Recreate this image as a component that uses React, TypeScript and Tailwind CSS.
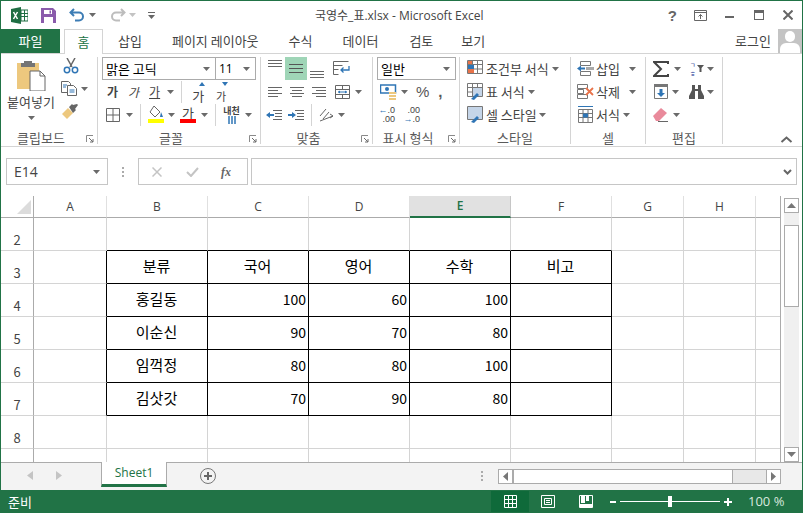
import React from 'react';

const Caret = ({ className = '' }: { className?: string }) => (
  <svg width="7" height="4" viewBox="0 0 7 4" className={`shrink-0 ${className}`}>
    <path d="M0 0h7L3.5 4z" fill="#6a6a6a" />
  </svg>
);

const Launcher = () => (
  <svg width="8" height="8" viewBox="0 0 8 8" className="absolute right-[3px] bottom-[1px]">
    <path d="M0.5 7V0.5H7" fill="none" stroke="#8a8a8a" />
    <path d="M3 3l4 4M7 4v3H4" fill="none" stroke="#6a6a6a" />
  </svg>
);

const Sep = ({ className = '' }: { className?: string }) => <div className={`w-px h-[22px] bg-[#d4d4d4] ${className}`} />;

const Group = ({ w, label, launcher, children }: { w: string; label: string; launcher?: boolean; children: React.ReactNode }) => (
  <div className={`relative flex flex-col border-r border-[#d4d4d4] ${w}`}>
    <div className="h-[73px] flex flex-col">{children}</div>
    <div className={`h-[14px] flex items-center justify-center text-[13px] leading-none text-[#5a5a5a] ${launcher ? 'pr-[16px]' : ''}`}>{label}</div>
    {launcher && <Launcher />}
  </div>
);

const Lines = ({ ys, x1s, x2s }: { ys: number[]; x1s: number[]; x2s: number[] }) => (
  <svg width="16" height="14" viewBox="0 0 16 14" className="shrink-0">
    {ys.map((y, i) => (
      <path key={i} d={`M${x1s[i]} ${y + 0.5}H${x2s[i]}`} stroke="#666" />
    ))}
  </svg>
);

const Ga = ({ className = '' }: { className?: string }) => <span className={`text-[12px] leading-none text-[#444] ${className}`}>가</span>;

const StyleIcon = ({ children }: { children?: React.ReactNode }) => (
  <svg width="17" height="17" viewBox="0 0 17 17" className="shrink-0">
    <path d="M.5.5h15v13H.5zM.5 4.500h15M.5 9h15M5.500.5v13M10.500.5v13" fill="#fff" stroke="#777" />
    {children}
  </svg>
);

const columns = ['B', 'C', 'D', 'E', 'F'];
const rows = [
  { n: 3, cells: ['분류', '국어', '영어', '수학', '비고'], head: true },
  { n: 4, cells: ['홍길동', '100', '60', '100', ''] },
  { n: 5, cells: ['이순신', '90', '70', '80', ''] },
  { n: 6, cells: ['임꺽정', '80', '80', '100', ''] },
  { n: 7, cells: ['김삿갓', '70', '90', '80', ''] },
];

const gridCell = 'border-r border-b border-[#d4d4d4]';
const rowHead = 'border-r border-b border-[#ababab] border-b-[#d4d4d4] flex items-end justify-center pb-[1px] text-[13px] leading-[18px] text-[#444]';

export default function App() {
  return (
    <div className="w-[803px] h-[513px] flex flex-col bg-white border-x border-t border-[#217346] overflow-hidden text-[#444] font-['Noto_Sans_CJK_KR','Noto_Sans',sans-serif]">
      {/* title bar */}
      <div className="relative h-[28px] flex items-center shrink-0">
        <svg width="17" height="17" viewBox="0 0 17 17" className="ml-[10px]">
          <path d="M0 2l10-2v17L0 15z" fill="#1f6e43" />
          <path d="M10 3h7v11h-7z" fill="#fff" stroke="#1f6e43" />
          <path d="M10 6.500h7M10 9.500h7M13.500 3v11" stroke="#1f6e43" />
          <path d="M2.500 5l4 7M6.500 5l-4 7" stroke="#fff" strokeWidth="1.500" />
        </svg>
        <svg width="15" height="15" viewBox="0 0 15 15" className="ml-[13px]">
          <path d="M0 0h12l3 3v12H0z" fill="#8a5bab" />
          <path d="M3 2h8v4H3zM3 9h9v6H3z" fill="#fff" />
          <path d="M8.500 2.500h1.500v3H8.500z" fill="#8a5bab" />
        </svg>
        <svg width="16" height="14" viewBox="0 0 16 14" className="ml-[13px]">
          <path d="M5 1L1.500 4.500 5 8M2 4.500h8a4 4 0 0 1 0 8H6" fill="none" stroke="#3d7db5" strokeWidth="2" />
        </svg>
        <Caret className="ml-[4px]" />
        <svg width="16" height="14" viewBox="0 0 16 14" className="ml-[14px]">
          <path d="M11 1l3.500 3.500L11 8M14 4.500H6a4 4 0 0 0 0 8h4" fill="none" stroke="#bdbdbd" strokeWidth="2" />
        </svg>
        <Caret className="ml-[3px] opacity-40" />
        <svg width="7" height="7" viewBox="0 0 7 7" className="ml-[12px]">
          <path d="M0 .5h7" stroke="#666" />
          <path d="M0 3h7L3.500 7z" fill="#666" />
        </svg>
        <div className="absolute left-[314px] top-[6px] text-[12px] leading-[18px] text-[#444] font-['Open_Sans','Noto_Sans_CJK_KR',sans-serif] whitespace-nowrap">국영수_표.xlsx - Microsoft Excel</div>
        <div className="ml-auto flex items-center mr-[9px]">
          <span className="text-[15px] leading-none font-bold text-[#666] font-['Liberation_Sans',sans-serif]">?</span>
          <svg width="13" height="11" viewBox="0 0 13 11" className="ml-[17px]">
            <path d="M.5.5h12v10H.5zM.5 2.500h12" fill="none" stroke="#666" />
            <path d="M6.500 9V4.500M4.500 6.500l2-2 2 2" fill="none" stroke="#666" />
          </svg>
          <div className="w-[9px] h-[2px] bg-[#666] ml-[18px] mt-[4px]" />
          <div className="w-[10px] h-[10px] border border-t-[3px] border-[#666] ml-[20px]" />
          <svg width="10" height="10" viewBox="0 0 10 10" className="ml-[19px]">
            <path d="M.5.5l9 9M9.500.5l-9 9" stroke="#666" strokeWidth="2" />
          </svg>
        </div>
      </div>

      {/* tabs */}
      <div className="relative h-[25px] flex items-stretch shrink-0 text-[13px] text-[#444] border-b border-[#d4d4d4]">
        <div className="w-[59px] h-[24px] bg-[#217346] text-white flex items-center justify-center">파일</div>
        <div className="w-[39px] h-[25px] ml-[4px] bg-white border-x border-t border-[#d4d4d4] text-[#217346] flex items-center justify-center z-10">홈</div>
        <div className="flex items-center h-[24px] whitespace-nowrap">
          <span className="ml-[15px]">삽입</span>
          <span className="ml-[30px]">페이지 레이아웃</span>
          <span className="ml-[30px]">수식</span>
          <span className="ml-[30px]">데이터</span>
          <span className="ml-[31px]">검토</span>
          <span className="ml-[28px]">보기</span>
        </div>
        <div className="ml-auto flex items-center h-[24px]">
          <span className="whitespace-nowrap">로그인</span>
          <div className="relative w-[24px] h-[24px] ml-[7px] bg-[#c4c4c4] overflow-hidden">
            <div className="absolute left-[7px] top-[2px] w-[10px] h-[11px] rounded-full bg-white" />
            <div className="absolute left-[2px] top-[14px] w-[20px] h-[12px] rounded-t-[6px] bg-white" />
          </div>
        </div>
      </div>

      {/* ribbon */}
      <div className="relative h-[93px] shrink-0 flex items-start pt-[3px] border-b border-[#d4d4d4]">
        <Group w="w-[97px]" label="클립보드" launcher>
          <div className="flex">
            <div className="w-[60px] flex flex-col items-center">
              <svg width="30" height="32" viewBox="0 0 30 32" className="mt-[2px]">
                <path d="M1 4h22v26H1z" fill="#edc87e" />
                <path d="M8 2h8v2h3v4H5V4h3z" fill="#757575" />
                <path d="M14 12h10l5 5v15H14z" fill="#fff" stroke="#666" />
                <path d="M24 12v5h5" fill="none" stroke="#666" />
              </svg>
              <span className="text-[13px] leading-[16px] mt-[3px] whitespace-nowrap">붙여넣기</span>
              <Caret className="mt-[6px]" />
            </div>
            <div className="flex flex-col">
              <svg width="16" height="16" viewBox="0 0 16 16" className="ml-[2px] mt-[1px]">
                <path d="M4 0l5 9M12 0L7 9" stroke="#666" strokeWidth="1.500" />
                <circle cx="4" cy="12" r="2.700" fill="none" stroke="#2f75b5" strokeWidth="1.500" />
                <circle cx="12" cy="12" r="2.700" fill="none" stroke="#2f75b5" strokeWidth="1.500" />
              </svg>
              <div className="flex items-center mt-[7px]">
                <svg width="16" height="15" viewBox="0 0 16 15">
                  <path d="M.5.500h7l2 2v9h-9z" fill="#fff" stroke="#666" />
                  <path d="M6.500 4.500h6l3 3v7h-9z" fill="#fff" stroke="#666" />
                  <path d="M2 4h4M2 6h3M8.500 9h5M8.500 11h5" stroke="#2f75b5" />
                </svg>
                <Caret className="ml-[4px]" />
              </div>
              <svg width="18" height="16" viewBox="0 0 18 16" className="mt-[8px]">
                <path d="M1 10l6-6 5 5-6 6z" fill="#edc87e" />
                <path d="M8 3l3-3 1 1 4-1 1 1-3 4 1 1-3 3z" fill="#666" />
              </svg>
            </div>
          </div>
        </Group>

        <Group w="w-[163px]" label="글꼴" launcher>
          <div className="flex ml-[4px]">
            <div className="w-[114px] h-[23px] border border-[#ababab] flex items-center justify-between pl-[3px] pr-[5px] text-[13px] text-black">
              맑은 고딕 <Caret />
            </div>
            <div className="w-[40px] h-[23px] border border-l-0 border-[#ababab] flex items-center justify-between pl-[3px] pr-[5px] text-[12px] text-black font-['Open_Sans',sans-serif]">
              11 <Caret />
            </div>
          </div>
          <div className="flex items-center h-[23px]">
            <Ga className="ml-[9px] font-bold" />
            <Ga className="ml-[10px] italic" />
            <Ga className="ml-[10px] underline" />
            <Caret className="ml-[7px]" />
            <Sep className="ml-[7px]" />
            <div className="relative ml-[9px] w-[14px] h-[20px] flex items-end justify-center">
              <span className="text-[13px] leading-none">가</span>
              <svg width="6" height="4" viewBox="0 0 6 4" className="absolute right-0 top-0"><path d="M0 4h6L3 0z" fill="#2f75b5" /></svg>
            </div>
            <div className="relative ml-[9px] w-[14px] h-[20px] flex items-end justify-center">
              <span className="text-[11px] leading-none">가</span>
              <svg width="6" height="4" viewBox="0 0 6 4" className="absolute right-0 top-0"><path d="M0 0h6L3 4z" fill="#2f75b5" /></svg>
            </div>
          </div>
          <div className="flex items-center h-[23px]">
            <svg width="14" height="14" viewBox="0 0 14 14" className="ml-[8px]">
              <path d="M.5.500h13v13H.5zM7 .5v13M.5 7h13" fill="none" stroke="#666" />
            </svg>
            <Caret className="ml-[6px]" />
            <Sep className="ml-[7px]" />
            <div className="ml-[7px] w-[16px] flex flex-col items-center">
              <svg width="14" height="13" viewBox="0 0 14 13">
                <path d="M5 0l6 6-5 5-5-5z" fill="#fff" stroke="#666" />
                <path d="M12 6l2 5h-3z" fill="#2f75b5" />
              </svg>
              <div className="w-[16px] h-[4px] bg-[#ffff00]" />
            </div>
            <Caret className="ml-[4px]" />
            <div className="ml-[5px] w-[16px] flex flex-col items-center">
              <span className="text-[13px] leading-[13px]">가</span>
              <div className="w-[16px] h-[4px] bg-[#ff0000]" />
            </div>
            <Caret className="ml-[5px]" />
            <Sep className="ml-[7px]" />
            <div className="ml-[8px] w-[15px] flex flex-col items-center text-[9px] leading-[10px] font-bold">
              <span className="whitespace-nowrap">내천</span>
              <svg width="10" height="8" viewBox="0 0 10 8"><path d="M2 0v8M5 0v8M8 0v8" stroke="#2f75b5" strokeWidth="1.500" /></svg>
            </div>
            <Caret className="ml-[6px]" />
          </div>
        </Group>

        <Group w="w-[112px]" label="맞춤" launcher>
          <div className="flex items-center h-[23px]">
            <div className="ml-[6px] self-start mt-[2px]"><Lines ys={[1, 4, 7]} x1s={[1, 1, 1]} x2s={[15, 15, 15]} /></div>
            <div className="ml-[2px] w-[22px] h-[23px] bg-[#9fd5b7] flex items-center justify-center">
              <svg width="14" height="9" viewBox="0 0 14 9"><path d="M0 .5h14M0 4.500h14M0 8.500h14" stroke="#555" /></svg>
            </div>
            <div className="ml-[2px] self-end mb-[1px]"><Lines ys={[6, 9, 12]} x1s={[1, 1, 1]} x2s={[15, 15, 15]} /></div>
            <svg width="17" height="16" viewBox="0 0 17 16" className="ml-[8px]">
              <path d="M.5.500h15M.5 4.500h9M.5 8.500h5M.5 13.500h5M.5.500v13" fill="none" stroke="#666" />
              <path d="M16 5v4H8M10.500 6.500L8 9l2.500 2.500" fill="none" stroke="#2f75b5" strokeWidth="1.300" />
            </svg>
          </div>
          <div className="flex items-center h-[23px]">
            <div className="ml-[6px]"><Lines ys={[2, 5, 8, 11]} x1s={[1, 1, 1, 1]} x2s={[15, 11, 15, 11]} /></div>
            <div className="ml-[6px]"><Lines ys={[2, 5, 8, 11]} x1s={[1, 3, 1, 3]} x2s={[15, 13, 15, 13]} /></div>
            <div className="ml-[6px]"><Lines ys={[2, 5, 8, 11]} x1s={[1, 5, 1, 5]} x2s={[15, 15, 15, 15]} /></div>
            <svg width="15" height="14" viewBox="0 0 15 14" className="ml-[8px]">
              <path d="M.5.500h14v13H.5zM.5 4.500h14M.5 9.500h14M7.500 .5v4M7.500 9.500v4" fill="none" stroke="#666" />
              <path d="M3 7h9" stroke="#2f75b5" />
              <path d="M3 7l2-1.500v3zM12 7l-2-1.500v3z" fill="#2f75b5" />
            </svg>
            <Caret className="ml-[5px]" />
          </div>
          <div className="flex items-center h-[23px]">
            <svg width="16" height="10" viewBox="0 0 16 10" className="ml-[5px]">
              <path d="M7 .5h9M9 3.500h7M9 6.500h7M7 9.500h9" stroke="#666" />
              <path d="M0 5l4-3v2h4v2H4v2z" fill="#2f75b5" />
            </svg>
            <svg width="16" height="10" viewBox="0 0 16 10" className="ml-[6px]">
              <path d="M7 .5h9M9 3.500h7M9 6.500h7M7 9.500h9" stroke="#666" />
              <path d="M8 5L4 2v2H0v2h4v2z" fill="#2f75b5" />
            </svg>
            <Sep className="ml-[7px]" />
            <svg width="16" height="14" viewBox="0 0 16 14" className="ml-[7px]">
              <path d="M1 8l6-7M4 11l6-7M1 13l13-5M11 6l3 2-3 2" fill="none" stroke="#666" />
            </svg>
            <Caret className="ml-[3px]" />
          </div>
        </Group>

        <Group w="w-[87px]" label="표시 형식" launcher>
          <div className="ml-[4px] w-[79px] h-[23px] border border-[#ababab] flex items-center justify-between pl-[3px] pr-[5px] text-[13px] text-black">
            일반 <Caret />
          </div>
          <div className="flex items-center h-[23px]">
            <svg width="17" height="16" viewBox="0 0 17 16" className="ml-[7px]">
              <path d="M.5 1h15v8H.5z" fill="#fff" stroke="#2f75b5" strokeWidth="1.500" />
              <circle cx="7" cy="5" r="2" fill="#2f75b5" />
              <path d="M9 8h7v2H9zM9 11h7v2H9zM9 14h7v2H9z" fill="#edc87e" />
            </svg>
            <Caret className="ml-[4px]" />
            <span className="ml-[8px] text-[15px] leading-none text-[#555] font-['Liberation_Sans',sans-serif]">%</span>
            <span className="ml-[9px] text-[15px] leading-none font-bold text-[#555] font-['Liberation_Sans',sans-serif]">,</span>
          </div>
          <div className="flex items-center h-[23px] text-[9px] leading-[9px] font-['Liberation_Sans',sans-serif] text-[#444]">
            <div className="ml-[7px] w-[15px] flex flex-col items-end">
              <span className="text-[#2f75b5] whitespace-nowrap">←<span className="text-[#444]">.0</span></span>
              <span className="whitespace-nowrap">.00</span>
            </div>
            <div className="ml-[10px] w-[15px] flex flex-col items-end">
              <span className="whitespace-nowrap">.00</span>
              <span className="text-[#2f75b5] whitespace-nowrap">→<span className="text-[#444]">.0</span></span>
            </div>
          </div>
        </Group>

        <Group w="w-[111px]" label="스타일">
          <div className="flex items-center h-[23px] text-[13px]">
            <div className="ml-[7px]"><StyleIcon><path d="M1 5h6v4H1z" fill="#2f75b5" /><path d="M1 9h6v4H1z" fill="#e8734a" /><path d="M1 1h4v3H1z" fill="#e8734a" /></StyleIcon></div>
            <span className="ml-[2px] whitespace-nowrap">조건부 서식</span>
            <Caret className="ml-[3px]" />
          </div>
          <div className="flex items-center h-[23px] text-[13px]">
            <div className="ml-[7px]"><StyleIcon><path d="M6 5h9v8H6z" fill="#c5d5e8" /><path d="M4 16l6-6 2 2-5 5z" fill="#2f75b5" /></StyleIcon></div>
            <span className="ml-[2px] whitespace-nowrap">표 서식</span>
            <Caret className="ml-[3px]" />
          </div>
          <div className="flex items-center h-[23px] text-[13px]">
            <div className="ml-[7px]"><StyleIcon><path d="M1 1h14v12H1z" fill="#c5d5e8" /><path d="M4 16l6-6 2 2-5 5z" fill="#2f75b5" /></StyleIcon></div>
            <span className="ml-[2px] whitespace-nowrap">셀 스타일</span>
            <Caret className="ml-[2px]" />
          </div>
        </Group>

        <Group w="w-[75px]" label="셀">
          <div className="flex items-center h-[23px] text-[13px]">
            <svg width="17" height="16" viewBox="0 0 17 16" className="ml-[6px]">
              <path d="M3.500.5h10v4h-10zM3.500 10.500h10v4h-10z" fill="#fff" stroke="#777" />
              <path d="M9 6h8v3H9z" fill="#a9a9a9" />
              <path d="M0 7.500l4-3v2h4v2H4v2z" fill="#2f75b5" />
            </svg>
            <span className="ml-[2px]">삽입</span>
            <Caret className="ml-[9px]" />
          </div>
          <div className="flex items-center h-[23px] text-[13px]">
            <svg width="17" height="16" viewBox="0 0 17 16" className="ml-[6px]">
              <path d="M.5.5h10v4H.5zM.5 10.500h10v4H.5zM.5 5.500h6v4H.5z" fill="#fff" stroke="#777" />
              <path d="M9 4l7 7M16 4l-7 7" stroke="#e8734a" strokeWidth="1.800" />
            </svg>
            <span className="ml-[2px]">삭제</span>
            <Caret className="ml-[9px]" />
          </div>
          <div className="flex items-center h-[23px] text-[13px]">
            <svg width="17" height="17" viewBox="0 0 17 17" className="ml-[6px]">
              <path d="M1 .5h15" stroke="#2f75b5" />
              <path d="M1.500 3.500h14v13h-14zM1.500 7.500h14M1.500 11.500h14M6 3.500v13M11 3.500v13" fill="#fff" stroke="#777" />
              <path d="M6 7.500h5v4H6z" fill="#2f75b5" />
            </svg>
            <span className="ml-[2px]">서식</span>
            <Caret className="ml-[3px]" />
          </div>
        </Group>

        <Group w="w-[77px]" label="편집">
          <div className="flex items-center h-[23px]">
            <svg width="16" height="16" viewBox="0 0 16 16" className="ml-[7px]">
              <path d="M15 3V1H1l7 7-7 7h14v-2" fill="none" stroke="#444" strokeWidth="2" />
            </svg>
            <Caret className="ml-[5px]" />
            <span className="ml-[9px] text-[6px] leading-[9px] text-[#5f6fb0] font-bold">ㄱ<br />ㅎ</span>
            <svg width="7" height="7" viewBox="0 0 7 7" className="ml-[1px]"><path d="M0 0h7L4.500 3v4h-2V3z" fill="#555" /></svg>
            <Caret className="ml-[3px]" />
          </div>
          <div className="flex items-center h-[23px]">
            <svg width="14" height="15" viewBox="0 0 14 15" className="ml-[8px]">
              <path d="M.5.5h13v14H.5z" fill="#fff" stroke="#777" />
              <path d="M0 0h14v3H0z" fill="#777" />
              <path d="M5.500 5h3v4h2.500L7 13 3 9h2.500z" fill="#2f75b5" />
            </svg>
            <Caret className="ml-[4px]" />
            <svg width="15" height="14" viewBox="0 0 15 14" className="ml-[10px]">
              <path d="M3 0h3v4h3V0h3v5l3 6v3H9V6H6v8H0v-3l3-6z" fill="#555" />
            </svg>
            <Caret className="ml-[3px]" />
          </div>
          <div className="flex items-center h-[23px]">
            <svg width="15" height="14" viewBox="0 0 15 14" className="ml-[7px]">
              <path d="M0 8l8-8 6 5-8 8H3z" fill="#e98a9b" />
              <path d="M5 13.500h10" stroke="#666" />
            </svg>
            <Caret className="ml-[5px]" />
          </div>
        </Group>

        <svg width="13" height="7" viewBox="0 0 13 7" className="absolute right-[9px] bottom-[3px]">
          <path d="M1.500 6l5-4.500 5 4.500" fill="none" stroke="#666" strokeWidth="2" />
        </svg>
      </div>

      {/* formula bar */}
      <div className="h-[27px] mt-[11px] shrink-0 flex items-stretch">
        <div className="ml-[5px] w-[102px] border border-[#c6c6c6] flex items-center justify-between pl-[7px] pr-[7px] text-[14px] text-[#444] font-['Open_Sans',sans-serif]">
          E14
          <Caret />
        </div>
        <div className="w-[30px] flex flex-col items-center justify-center gap-[2px]">
          <div className="w-[2px] h-[2px] bg-[#ababab]" />
          <div className="w-[2px] h-[2px] bg-[#ababab]" />
          <div className="w-[2px] h-[2px] bg-[#ababab]" />
        </div>
        <div className="w-[110px] border border-[#c6c6c6] flex items-center">
          <svg width="10" height="10" viewBox="0 0 10 10" className="ml-[13px]"><path d="M.5.5l9 9M9.500.5l-9 9" stroke="#c4c4c4" strokeWidth="1.500" /></svg>
          <svg width="13" height="10" viewBox="0 0 13 10" className="ml-[24px]"><path d="M1 5l4 4 7-8" fill="none" stroke="#c4c4c4" strokeWidth="2" /></svg>
          <span className="ml-[22px] text-[12px] leading-none italic font-bold text-[#666] font-['Liberation_Serif',serif]">fx</span>
        </div>
        <div className="ml-[3px] w-[546px] border border-[#c6c6c6] flex items-center justify-end pr-[4px]">
          <svg width="9" height="6" viewBox="0 0 9 6"><path d="M1 1l3.500 3.500L8 1" fill="none" stroke="#666" strokeWidth="2" /></svg>
        </div>
      </div>

      {/* sheet */}
      <div className="mt-[11px] h-[266px] shrink-0 flex overflow-hidden">
        <div className="w-[780px] border-r border-[#ababab] overflow-hidden grid grid-cols-[33px_73px_101px_101px_101px_101px_101px_72px_72px_25px] grid-rows-[22px_33px_33px_33px_33px_33px_33px_33px_13px]">
          {/* header row */}
          <div className="relative border-r border-b border-[#ababab]">
            <svg width="14" height="14" viewBox="0 0 14 14" className="absolute right-[2px] bottom-[3px]"><path d="M14 0v14H0z" fill="#dcdcdc" /></svg>
          </div>
          {['A', 'B', 'C', 'D', 'E', 'F', 'G', 'H'].map((c) => (
            <div
              key={c}
              className={`flex items-center justify-center text-[12px] font-['Open_Sans',sans-serif] ${
                c === 'E'
                  ? 'bg-[#e1e1e1] text-[#217346] font-semibold border-b-2 border-b-[#217346] border-r border-r-[#c6c6c6]'
                  : 'text-[#444] border-b border-b-[#ababab] border-r border-r-[#e0e0e0]'
              }`}
            >
              {c}
            </div>
          ))}
          <div className="border-b border-[#ababab]" />

          {/* row 2 */}
          <div className={rowHead}>2</div>
          <div className="border-r border-b border-r-[#d4d4d4] border-b-[#d4d4d4]" />
          {columns.map((c) => (
            <div key={c} className="border-r border-r-[#d4d4d4] border-b border-b-black" />
          ))}
          <div className={gridCell} />
          <div className={gridCell} />
          <div className="border-b border-[#d4d4d4]" />

          {/* data rows */}
          {rows.map((r) => (
            <React.Fragment key={r.n}>
              <div className={rowHead}>{r.n}</div>
              <div className="border-r border-b border-r-black border-b-[#d4d4d4]" />
              {r.cells.map((v, i) => (
                <div
                  key={i}
                  className={`border-r border-b border-black flex items-center pl-[1px] pr-[2px] pb-[2px] text-black ${
                    r.head || i === 0 ? 'justify-center text-[15px]' : 'justify-end text-[14px]'
                  }`}
                >
                  {v}
                </div>
              ))}
              <div className={gridCell} />
              <div className={gridCell} />
              <div className="border-b border-[#d4d4d4]" />
            </React.Fragment>
          ))}

          {/* row 8 and cut off row */}
          <div className={rowHead}>8</div>
          {['a', 'b', 'c', 'd', 'e', 'f', 'g', 'h'].map((k) => <div key={k} className={gridCell} />)}
          <div className="border-b border-[#d4d4d4]" />
          <div className="border-r border-[#ababab]" />
          {['a', 'b', 'c', 'd', 'e', 'f', 'g', 'h'].map((k) => <div key={k} className="border-r border-[#d4d4d4]" />)}
          <div />
        </div>

        {/* vertical scrollbar */}
        <div className="ml-[3px] w-[15px] flex flex-col">
          <div className="h-[2px]" />
          <div className="h-[15px] border border-[#ababab] flex items-center justify-center">
            <svg width="9" height="5" viewBox="0 0 9 5"><path d="M0 5h9L4.500 0z" fill="#777" /></svg>
          </div>
          <div className="flex-1 bg-[#f0f0f0] flex flex-col">
            <div className="h-[12px]" />
            <div className="h-[82px] bg-white border border-[#ababab]" />
          </div>
          <div className="h-[15px] border border-[#ababab] flex items-center justify-center">
            <svg width="9" height="5" viewBox="0 0 9 5"><path d="M0 0h9L4.500 5z" fill="#777" /></svg>
          </div>
        </div>
      </div>

      {/* sheet tabs */}
      <div className="h-[28px] shrink-0 bg-[#f3f3f3] border-t border-[#ababab] flex items-start">
        <svg width="6" height="9" viewBox="0 0 6 9" className="ml-[26px] mt-[8px]"><path d="M6 0v9L0 4.500z" fill="#c4c4c4" /></svg>
        <svg width="6" height="9" viewBox="0 0 6 9" className="ml-[23px] mt-[8px]"><path d="M0 0v9l6-4.500z" fill="#c4c4c4" /></svg>
        <div className="ml-[39px] -mt-px w-[66px] h-[25px] bg-white border-x border-b-[3px] border-x-[#ababab] border-b-[#217346] flex items-center justify-center text-[12px] text-[#217346] font-['Open_Sans',sans-serif]">Sheet1</div>
        <svg width="16" height="16" viewBox="0 0 16 16" className="ml-[33px] mt-[5px]">
          <circle cx="8" cy="8" r="7.500" fill="none" stroke="#777" />
          <path d="M8 4v8M4 8h8" stroke="#666" strokeWidth="2" />
        </svg>
        <div className="ml-[265px] mt-[8px] flex flex-col gap-[2px]">
          <div className="w-[2px] h-[2px] bg-[#ababab]" />
          <div className="w-[2px] h-[2px] bg-[#ababab]" />
          <div className="w-[2px] h-[2px] bg-[#ababab]" />
        </div>
        <div className="ml-[15px] mt-[6px] w-[283px] h-[15px] flex bg-[#e8e8e8] border border-[#ababab]">
          <div className="w-[14px] bg-white flex items-center justify-center border-r border-[#ababab]">
            <svg width="5" height="9" viewBox="0 0 5 9"><path d="M5 0v9L0 4.500z" fill="#777" /></svg>
          </div>
          <div className="w-[220px] bg-white border-r border-[#ababab] border-l border-l-[#ababab]" />
          <div className="flex-1" />
          <div className="w-[14px] bg-white flex items-center justify-center border-l border-[#ababab]">
            <svg width="5" height="9" viewBox="0 0 5 9"><path d="M0 0v9l5-4.500z" fill="#777" /></svg>
          </div>
        </div>
      </div>

      {/* status bar */}
      <div className="h-[23px] shrink-0 bg-[#217346] text-white flex items-center text-[13px]">
        <span className="ml-[7px] w-[24px] whitespace-nowrap">준비</span>
        <div className="ml-[459px] w-[38px] h-[21px] bg-[#0f6a3a] flex items-center justify-center">
          <svg width="13" height="13" viewBox="0 0 13 13"><path d="M.5.500h12v12H.5zM4.500.5v12M8.500.5v12M.5 4.500h12M.5 8.500h12" fill="none" stroke="#fff" /></svg>
        </div>
        <svg width="14" height="13" viewBox="0 0 14 13" className="ml-[12px]"><path d="M.5.500h13v12H.5zM3.500 3.500h7v6h-7zM5 5.500h4M5 7.500h4" fill="none" stroke="#fff" /></svg>
        <svg width="14" height="13" viewBox="0 0 14 13" className="ml-[24px]">
          <path d="M.5.500h13v12H.5z" fill="none" stroke="#fff" />
          <path d="M2 1h4v7H2zM7 1h3v5H7zM1 9h12v3H1z" fill="#fff" />
        </svg>
        <div className="ml-[17px] w-[6px] h-[2px] bg-white" />
        <div className="relative ml-[4px] w-[100px] h-px bg-white">
          <div className="absolute left-[48px] -top-[5px] w-[4px] h-[11px] bg-white" />
        </div>
        <div className="relative ml-[4px] w-[8px] h-[8px]">
          <div className="absolute left-0 top-[3px] w-[8px] h-[2px] bg-white" />
          <div className="absolute left-[3px] top-0 w-[2px] h-[8px] bg-white" />
        </div>
        <span className="ml-[16px] text-[13px] text-[#d8e8de] font-['Open_Sans',sans-serif] whitespace-nowrap">100 %</span>
      </div>
    </div>
  );
}
